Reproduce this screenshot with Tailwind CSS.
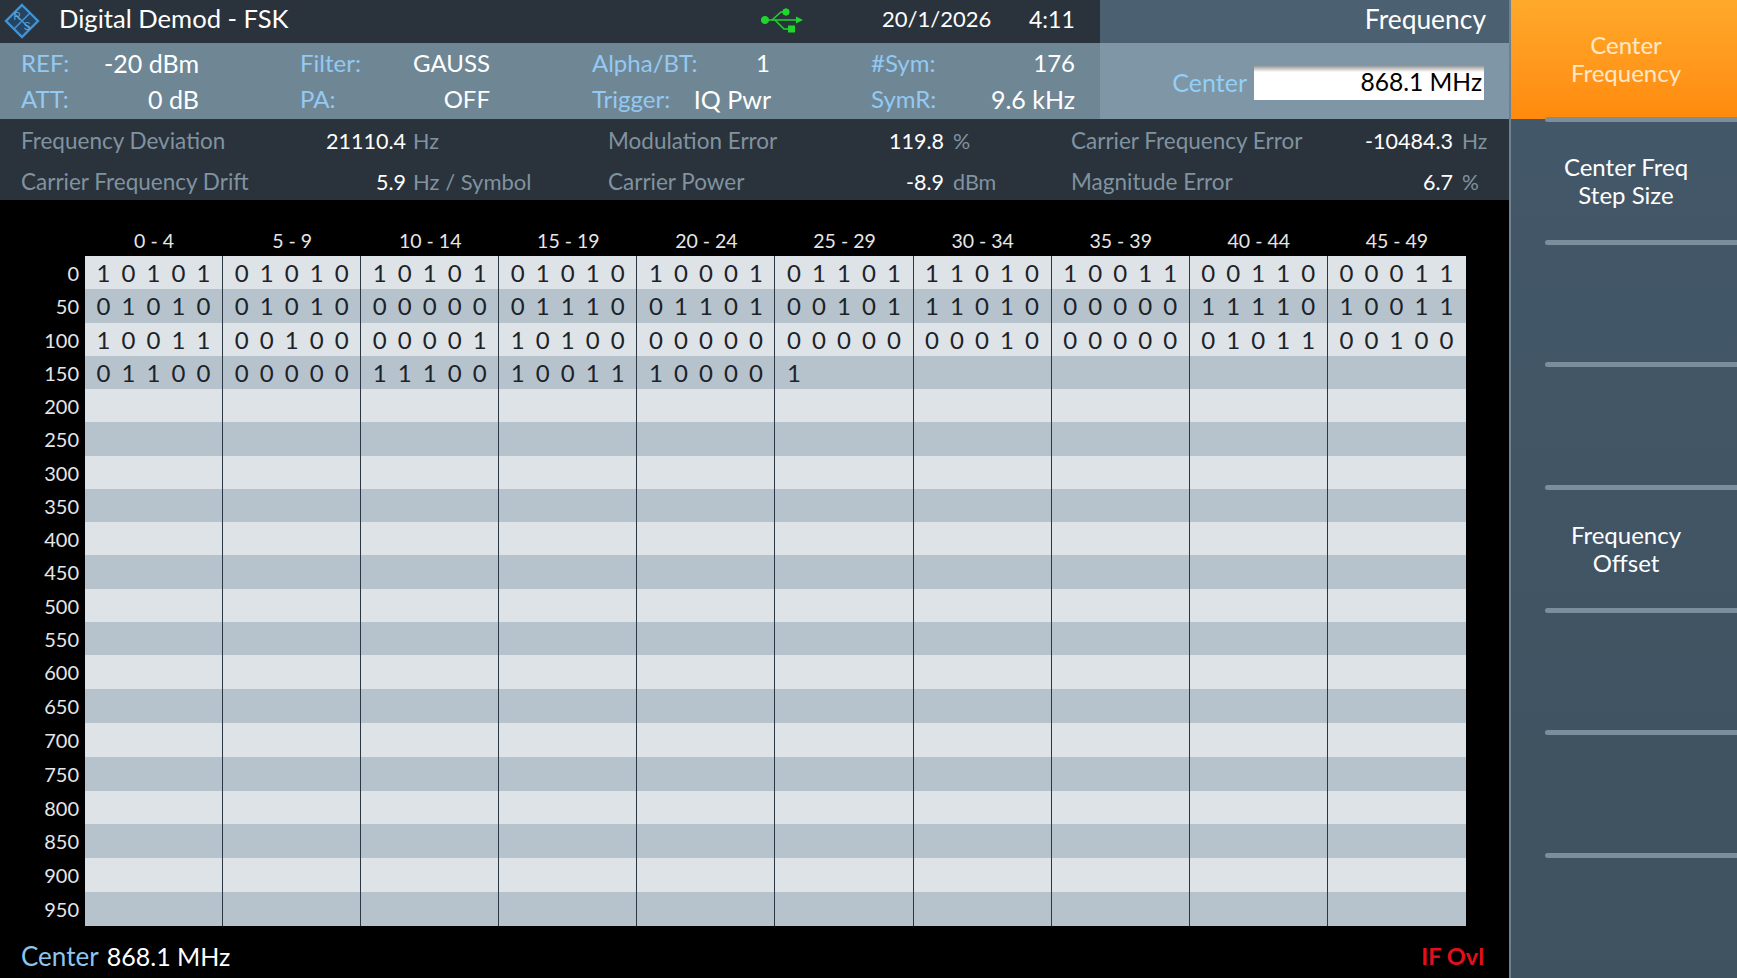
<!DOCTYPE html>
<html lang="en">
<head>
<meta charset="UTF-8">
<title>Digital Demod - FSK</title>
<script src="https://cdn.jsdelivr.net/npm/@tailwindcss/browser@4"></script>
</head>
<body class="bg-black text-white overflow-hidden font-['Lato','Noto_Sans',sans-serif]">
<div class="flex h-[978px] w-[1737px]">

  <!-- left: measurement area -->
  <div class="w-[1509px] flex-none flex flex-col">

    <!-- title bar -->
    <div class="flex h-[43px]">
      <div class="w-[1100px] bg-[#2a323c] flex items-center pb-[5px]">
        <svg class="ml-[4px] mt-[3px] w-[36px] h-[36px]" viewBox="0 0 36 36">
          <path d="M18 2 L34 18 L18 34 L2 18 Z" fill="#26445f" stroke="#3f93d6" stroke-width="2.4"/>
          <path d="M10 10 L26 26 M26 10 L10 26" stroke="#3f93d6" stroke-width="1.6"/>
          <text x="13" y="17" font-size="10" fill="#6aa6d6" font-family="Liberation Sans" text-anchor="middle">R</text>
          <text x="23" y="27" font-size="10" fill="#6aa6d6" font-family="Liberation Sans" text-anchor="middle">S</text>
        </svg>
        <span class="ml-[19px] w-[247px] text-[25.6px] leading-none">Digital Demod - FSK</span>
        <svg class="ml-[454px] mt-[2px] w-[44px] h-[26px]" viewBox="0 0 44 26" fill="#1fd62c" stroke="#1fd62c">
          <circle cx="5" cy="13" r="3.6"/>
          <path d="M5 13 H38" stroke-width="1.6" fill="none"/>
          <path d="M36 9.5 L43 13 L36 16.5 Z" stroke="none"/>
          <path d="M12 13 L21 5 H25" stroke-width="1.6" fill="none"/>
          <circle cx="26" cy="5" r="3.2"/>
          <path d="M15 13 L24 22 H29" stroke-width="1.6" fill="none"/>
          <rect x="28" y="18.5" width="7" height="7" stroke="none"/>
        </svg>
        <span class="ml-[78px] w-[109px] text-[22px] leading-none">20/1/2026</span>
        <span class="ml-[38px] text-[23px] leading-none">4:11</span>
      </div>
      <div class="flex-1 bg-[#4b6070] flex items-center justify-end pr-[23px] pb-[5px] text-[26.4px] leading-none">Frequency</div>
    </div>

    <!-- setup info -->
    <div class="flex h-[76px] text-[24px] leading-[36px]">
      <div class="w-[1100px] bg-[#6f8795] flex pl-[21px] pt-[2px]">
        <div class="w-[178px] mr-[101px]">
          <div class="flex justify-between"><span class="text-[#93c9f2]">REF:</span><span class="text-[25px]">-20 dBm</span></div>
          <div class="flex justify-between"><span class="text-[#93c9f2]">ATT:</span><span class="text-[25px]">0 dB</span></div>
        </div>
        <div class="w-[190px] mr-[102px]">
          <div class="flex justify-between"><span class="text-[#93c9f2]">Filter:</span><span>GAUSS</span></div>
          <div class="flex justify-between"><span class="text-[#93c9f2]">PA:</span><span>OFF</span></div>
        </div>
        <div class="w-[179px] mr-[100px]">
          <div class="flex justify-between"><span class="text-[#93c9f2]">Alpha/BT:</span><span class="mr-[1px]">1</span></div>
          <div class="flex justify-between"><span class="text-[#93c9f2]">Trigger:</span><span class="text-[25px]">IQ Pwr</span></div>
        </div>
        <div class="w-[204px]">
          <div class="flex justify-between"><span class="text-[#93c9f2]">#Sym:</span><span>176</span></div>
          <div class="flex justify-between"><span class="text-[#93c9f2]">SymR:</span><span class="text-[25px]">9.6 kHz</span></div>
        </div>
      </div>
      <div class="flex-1 bg-[#7e96a5] flex items-center justify-end pr-[25px] pt-[2px] text-[25px]">
        <span class="text-[#93cff7] mr-[7px]">Center</span>
        <div class="w-[230px] h-[35px] bg-linear-to-b from-[#8a8a8a] via-white via-20% to-white text-black text-[24.6px] flex items-center justify-end pr-[2px]">868.1 MHz</div>
      </div>
    </div>

    <!-- measurement values -->
    <div class="h-[81px] bg-[#2a323c] flex pl-[21px] pt-[2px] text-[22.5px] leading-[40.5px] text-[#80939f]">
      <div class="w-[587px] grid grid-cols-[385px_1fr]">
        <div class="flex justify-between"><span>Frequency Deviation</span><span class="text-white text-[21.5px]">21110.4</span></div><div class="pl-[7px] text-[21.5px]">Hz</div>
        <div class="flex justify-between"><span>Carrier Frequency Drift</span><span class="text-white text-[21.5px]">5.9</span></div><div class="pl-[7px] text-[22px]">Hz / Symbol</div>
      </div>
      <div class="w-[463px] grid grid-cols-[336px_1fr]">
        <div class="flex justify-between"><span>Modulation Error</span><span class="text-white text-[21.5px]">119.8</span></div><div class="pl-[9px] text-[21.5px]">%</div>
        <div class="flex justify-between"><span>Carrier Power</span><span class="text-white text-[21.5px]">-8.9</span></div><div class="pl-[9px] text-[21.5px]">dBm</div>
      </div>
      <div class="w-[420px] grid grid-cols-[382px_1fr]">
        <div class="flex justify-between"><span>Carrier Frequency Error</span><span class="text-white text-[21.5px]">-10484.3</span></div><div class="pl-[9px] text-[21px]">Hz</div>
        <div class="flex justify-between"><span>Magnitude Error</span><span class="text-white text-[21.5px]">6.7</span></div><div class="pl-[9px] text-[21px]">%</div>
      </div>
    </div>

    <!-- bit table -->
    <div class="flex-1">
      <div id="head" class="flex ml-[85px] h-[56px] items-end pb-[6px] text-[19.5px] leading-none text-[#e6e6e6]"></div>
      <div id="rows"></div>
      <div class="mt-[14px] flex justify-between pl-[21px] pr-[25px] text-[26px] leading-[32px]">
        <div><span class="text-[#8cc6ec]">Center</span> <span class="ml-[2px] text-[25px]">868.1 MHz</span></div>
        <div class="text-[#e2101c] font-bold text-[23.5px]">IF Ovl</div>
      </div>
    </div>
  </div>

  <!-- softkeys -->
  <div class="flex-1 border-l-[2px] border-[#6c8291] bg-linear-to-b from-[#43586a] to-[#3f525f] flex flex-col text-[24px] leading-[28px] text-center">
    <div class="h-[119px] relative pl-[4px] pb-[2px] bg-linear-to-b from-[#ffa92a] to-[#ff8a0c] text-[#ffe8c8] flex items-center justify-center"><div>Center<br>Frequency</div><i class="absolute left-[34px] right-0 bottom-[-3px] h-[5px] rounded-l bg-[#7a8e9c]"></i></div>
    <div class="h-[122.7px] relative pl-[4px] pt-[2px] flex items-center justify-center"><div>Center Freq<br>Step Size</div><i class="absolute left-[34px] right-0 bottom-[-3px] h-[5px] rounded-l bg-[#7a8e9c]"></i></div>
    <div class="h-[122.7px] relative"><i class="absolute left-[34px] right-0 bottom-[-3px] h-[5px] rounded-l bg-[#7a8e9c]"></i></div>
    <div class="h-[122.7px] relative"><i class="absolute left-[34px] right-0 bottom-[-3px] h-[5px] rounded-l bg-[#7a8e9c]"></i></div>
    <div class="h-[122.7px] relative pl-[4px] pt-[2px] flex items-center justify-center"><div>Frequency<br>Offset</div><i class="absolute left-[34px] right-0 bottom-[-3px] h-[5px] rounded-l bg-[#7a8e9c]"></i></div>
    <div class="h-[122.7px] relative"><i class="absolute left-[34px] right-0 bottom-[-3px] h-[5px] rounded-l bg-[#7a8e9c]"></i></div>
    <div class="h-[122.7px] relative"><i class="absolute left-[34px] right-0 bottom-[-3px] h-[5px] rounded-l bg-[#7a8e9c]"></i></div>
  </div>
</div>

<script>
  const bits = [
    '10101 01010 10101 01010 10001 01101 11010 10011 00110 00011',
    '01010 01010 00000 01110 01101 00101 11010 00000 11110 10011',
    '10011 00100 00001 10100 00000 00000 00010 00000 01011 00100',
    '01100 00000 11100 10011 10000 1'
  ];

  let head = '';
  for (let c = 0; c < 10; c++) {
    head += `<div class="w-[138.1px] text-center">${c * 5} - ${c * 5 + 4}</div>`;
  }
  document.getElementById('head').innerHTML = head;

  let rows = '';
  for (let r = 0; r < 20; r++) {
    const groups = (bits[r] || '').split(' ');
    const height = r < 12 ? 'h-[33.25px]' : 'h-[33.875px]';
    const bg = r % 2 ? 'bg-[#b6c3cd]' : 'bg-[#dde3e6]';
    rows += `<div class="flex ${height}">`;
    rows += `<div class="w-[80px] pr-[1px] text-right text-[20px] leading-[35px] text-[#e6e6e6]">${r * 50}</div><div class="w-[5px]"></div>`;
    rows += `<div class="flex ${bg}">`;
    for (let c = 0; c < 10; c++) {
      const border = c < 9 ? 'border-r border-[#2b3742]' : '';
      const g = groups[c] || '';
      rows += `<div class="w-[138.1px] flex pl-[6px] ${border} text-[24px] leading-[33px] text-[#1c2228]">`;
      for (const d of g) rows += `<span class="w-[25px] text-center">${d}</span>`;
      rows += '</div>';
    }
    rows += '</div></div>';
  }
  document.getElementById('rows').innerHTML = rows;
</script>
</body>
</html>
